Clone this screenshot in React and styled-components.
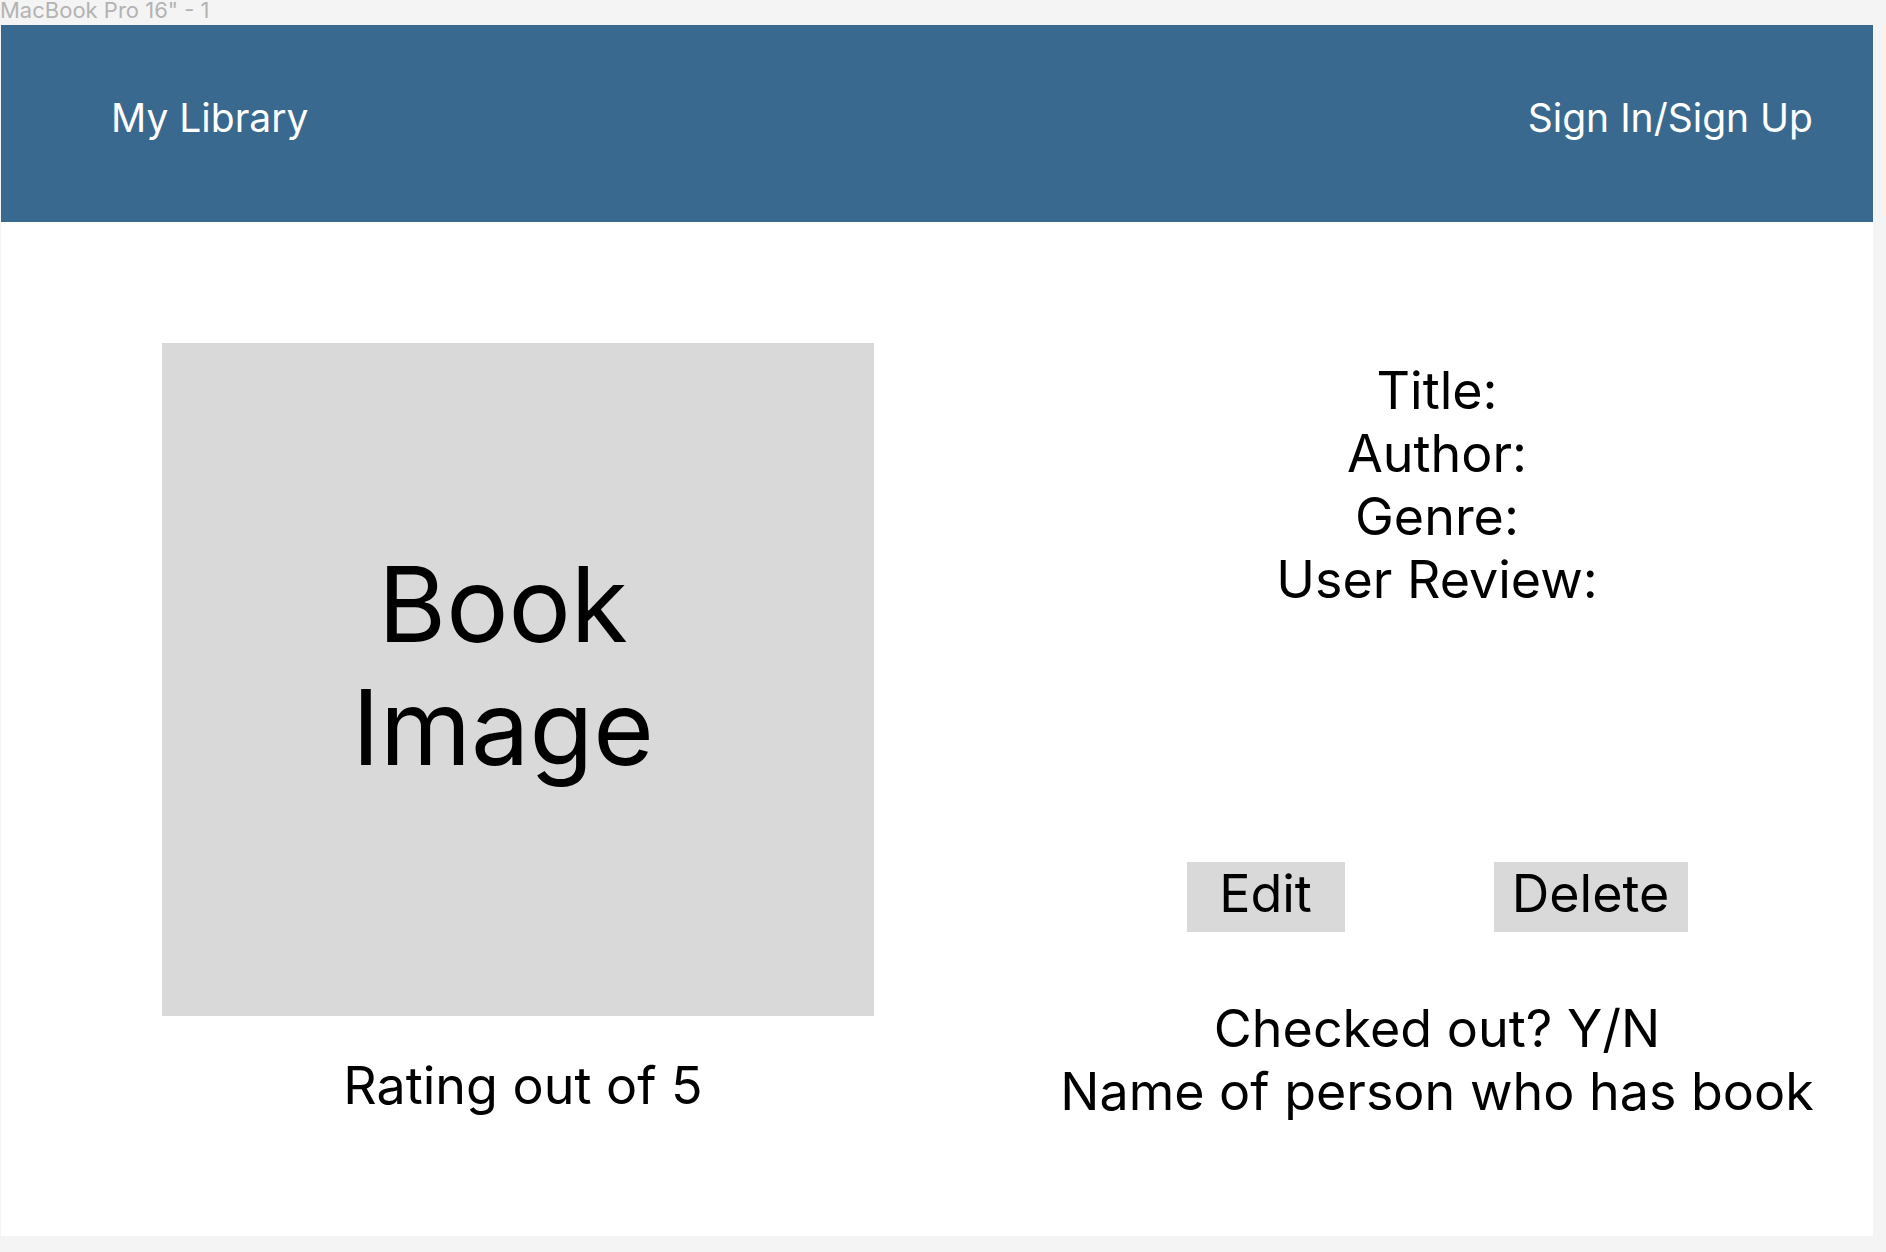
import React from 'react';
import styled, { createGlobalStyle } from 'styled-components';

const GlobalStyle = createGlobalStyle`
    html, body {
        margin: 0;
        padding: 0;
        background: #f4f4f4;
        font-family: Inter, "Noto Sans", "Liberation Sans", sans-serif;
    }
`

export const Canvas = styled.div`
    width: 1886px;
    height: 1252px;
    overflow: hidden;
    background: #f4f4f4;
`

export const FrameLabel = styled.div`
    height: 25px;
    line-height: 20px;
    font-size: 22px;
    color: #b3b3b3;
    white-space: nowrap;
`

export const Frame = styled.div`
    width: 1872px;
    height: 1211px;
    margin-left: 1px;
    background: #ffffff;
`

export const Header = styled.header`
    height: 197px;
    background: #3a698f;
    display: flex;
    align-items: center;
    justify-content: space-between;
    padding: 0 60px 12px 110px;
    box-sizing: border-box;
`

export const HeaderLink = styled.a`
    color: #ffffff;
    font-size: 39px;
    text-decoration: none;
    cursor: pointer;
`

export const Main = styled.main`
    display: grid;
    grid-template-columns: 1000px 1fr;
`

export const LeftColumn = styled.section`
    padding: 121px 0 0 161px;
    display: flex;
    flex-direction: column;
    width: 712px;
`

export const ImageBox = styled.div`
    width: 712px;
    height: 673px;
    background: #d9d9d9;
    display: flex;
    align-items: center;
    justify-content: center;
    padding: 0 30px 27px 0;
    box-sizing: border-box;
    font-size: 104px;
    line-height: 123px;
    text-align: center;
    color: #000;
`

export const BodyText = styled.div`
    font-size: 52px;
    line-height: 63px;
    color: #000;
    text-align: center;
    margin-top: ${props => props.top || 0}px;
    padding-left: ${props => props.shift || 0}px;
`

export const RightColumn = styled.section`
    padding-top: 137px;
    display: flex;
    flex-direction: column;
    align-items: center;
`

export const ButtonRow = styled.div`
    display: flex;
    gap: 149px;
    margin-top: 251px;
`

export const ActionButton = styled.button`
    width: ${props => props.width}px;
    height: 70px;
    padding: 0 0 7px 0;
    border: none;
    background: #d9d9d9;
    font-family: inherit;
    font-size: 52px;
    color: #000;
    cursor: pointer;
`

export default function App() {
    return (
        <Canvas>
            <GlobalStyle />
            <FrameLabel>MacBook Pro 16" - 1</FrameLabel>
            <Frame>
                <Header>
                    <HeaderLink>My Library</HeaderLink>
                    <HeaderLink>Sign In/Sign Up</HeaderLink>
                </Header>
                <Main>
                    <LeftColumn>
                        <ImageBox>Book<br />Image</ImageBox>
                        <BodyText top={38} shift={10}>Rating out of 5</BodyText>
                    </LeftColumn>
                    <RightColumn>
                        <BodyText>
                            Title:<br />
                            Author:<br />
                            Genre:<br />
                            User Review:
                        </BodyText>
                        <ButtonRow>
                            <ActionButton width={158}>Edit</ActionButton>
                            <ActionButton width={194}>Delete</ActionButton>
                        </ButtonRow>
                        <BodyText top={65}>
                            Checked out? Y/N<br />
                            Name of person who has book
                        </BodyText>
                    </RightColumn>
                </Main>
            </Frame>
        </Canvas>
    );
}
